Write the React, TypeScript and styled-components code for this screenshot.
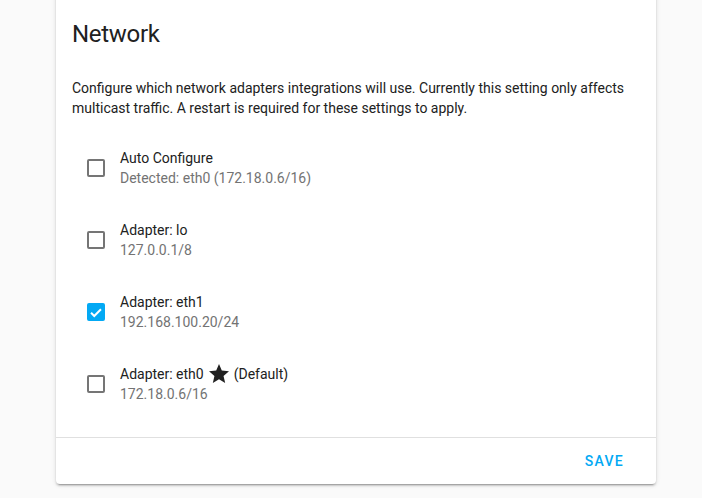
import styled, { createGlobalStyle } from "styled-components";

const GlobalStyle = createGlobalStyle`
  html, body {
    margin: 0;
    padding: 0;
    background: #fafafa;
    font-family: Roboto, "Noto Sans", sans-serif;
    -webkit-font-smoothing: antialiased;
  }
`;

const Page = styled.div`
  padding: 0 0 14px 56px;
`;

const Card = styled.div`
  width: 600px;
  margin-top: -8px;
  background: #fff;
  border-radius: 4px;
  box-shadow: 0 2px 2px 0 rgba(0, 0, 0, 0.14), 0 1px 5px 0 rgba(0, 0, 0, 0.12),
    0 3px 1px -2px rgba(0, 0, 0, 0.2);
`;

const Header = styled.div`
  padding: 26px 16px 0;
  font-size: 24px;
  line-height: 32px;
  color: #212121;
  letter-spacing: -0.012em;
`;

const Content = styled.div`
  padding: 0 16px 17px;
`;

const Description = styled.p`
  margin: 29px 0 14px;
  font-size: 14px;
  line-height: 19.5px;
  color: #212121;
`;

const List = styled.div`
  display: flex;
  flex-direction: column;
`;

const Item = styled.label`
  display: flex;
  align-items: center;
  height: 72px;
  cursor: pointer;
`;

const CheckCell = styled.div`
  width: 48px;
  flex-shrink: 0;
  display: flex;
  padding-left: 15px;
  box-sizing: border-box;
`;

const Box = styled.div<{ $checked?: boolean }>`
  width: 18px;
  height: 18px;
  box-sizing: border-box;
  border-radius: 2px;
  border: 2px solid ${p => (p.$checked ? "#03a9f4" : "#757575")};
  background: ${p => (p.$checked ? "#03a9f4" : "transparent")};
  display: flex;
  align-items: center;
  justify-content: center;
`;

const Texts = styled.div`
  display: flex;
  flex-direction: column;
  font-size: 14px;
  line-height: 20px;
`;

const Primary = styled.span`
  color: #212121;
  display: flex;
  align-items: center;
  height: 20px;
`;

const Secondary = styled.span`
  color: #737373;
`;

const Star = styled.svg`
  width: 24px;
  height: 24px;
  margin: 0 3px 0 3px;
  fill: #212121;
`;

const Actions = styled.div`
  border-top: 1px solid #e0e0e0;
  padding: 5px 24px;
  display: flex;
  justify-content: flex-end;
`;

const Button = styled.button`
  height: 36px;
  padding: 0 8px;
  border: none;
  background: none;
  font-family: Roboto, sans-serif;
  font-size: 14px;
  font-weight: 500;
  letter-spacing: 0.0892857em;
  text-transform: uppercase;
  color: #03a9f4;
  cursor: pointer;
`;

type Adapter = {
  title: string;
  sub: string;
  checked?: boolean;
  isDefault?: boolean;
};

const adapters: Adapter[] = [
  { title: "Auto Configure", sub: "Detected: eth0 (172.18.0.6/16)" },
  { title: "Adapter: lo", sub: "127.0.0.1/8" },
  { title: "Adapter: eth1", sub: "192.168.100.20/24", checked: true },
  { title: "Adapter: eth0", sub: "172.18.0.6/16", isDefault: true },
];

function Checkbox({ checked }: { checked?: boolean }) {
  return (
    <Box $checked={checked}>
      {checked && (
        <svg width="15" height="15" viewBox="0 0 24 24">
          <path
            d="M3.5 12.5 L9 18 L20.5 6.5"
            fill="none"
            stroke="#fff"
            strokeWidth="3.4"
          />
        </svg>
      )}
    </Box>
  );
}

export default function App() {
  return (
    <>
      <GlobalStyle />
      <Page>
        <Card>
          <Header>Network</Header>
          <Content>
            <Description>
              Configure which network adapters integrations will use. Currently
              this setting only affects multicast traffic. A restart is required
              for these settings to apply.
            </Description>
            <List>
              {adapters.map(a => (
                <Item key={a.title}>
                  <CheckCell>
                    <Checkbox checked={a.checked} />
                  </CheckCell>
                  <Texts>
                    <Primary>
                      {a.title}
                      {a.isDefault && (
                        <>
                          <Star viewBox="0 0 24 24">
                            <path d="M12,17.27L18.18,21L16.54,13.97L22,9.24L14.81,8.62L12,2L9.19,8.62L2,9.24L7.45,13.97L5.82,21L12,17.27Z" />
                          </Star>
                          (Default)
                        </>
                      )}
                    </Primary>
                    <Secondary>{a.sub}</Secondary>
                  </Texts>
                </Item>
              ))}
            </List>
          </Content>
          <Actions>
            <Button>Save</Button>
          </Actions>
        </Card>
      </Page>
    </>
  );
}
